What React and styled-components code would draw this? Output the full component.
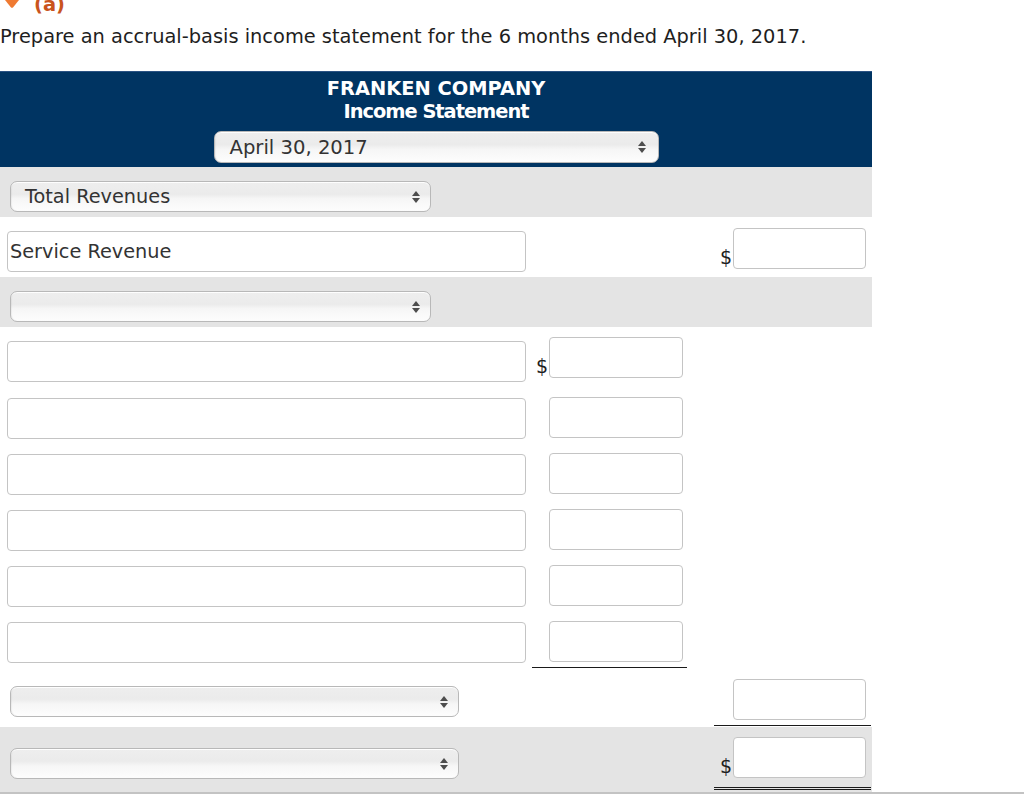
import React from 'react';
import styled, { createGlobalStyle } from 'styled-components';

const GlobalStyle = createGlobalStyle`
  html, body { margin: 0; padding: 0; background: #fff; }
  body { font-family: "DejaVu Sans", Verdana, sans-serif; color: #1e1e1e; overflow: hidden; }
  * { box-sizing: border-box; }
`;

const Page = styled.div`
  width: 1024px;
  height: 794px;
  overflow: hidden;
  display: flex;
  flex-direction: column;
`;

const PartHeading = styled.div`
  display: flex;
  align-items: flex-start;
  gap: 12px;
  height: 20px;
  margin-top: -5px;
  padding-left: 2px;
  font-size: 19.5px;
  font-weight: bold;
  line-height: 20px;
  color: #c9541d;
`;

const Caret = styled.svg`
  display: block;
  margin-top: 1px;
  flex: none;
`;

const Prompt = styled.p`
  margin: 9px 0 0;
  font-size: 19.4px;
  line-height: 26px;
  color: #1e1e1e;
  white-space: nowrap;
`;

const Statement = styled.div`
  width: 872px;
  margin-top: 21px;
  display: flex;
  flex-direction: column;
`;

const Banner = styled.div`
  background: #003462;
  border-top: 1px solid #2a5283;
  padding: 5px 0 4px;
  display: flex;
  flex-direction: column;
  align-items: center;
  color: #fff;
`;

const BannerTitle = styled.div`
  font-weight: bold;
  font-size: 19.4px;
  line-height: 23px;
  text-align: center;
  letter-spacing: ${(p) => p.$tight || 0}px;
  white-space: nowrap;
`;

const SelectBox = styled.div`
  display: flex;
  align-items: center;
  justify-content: space-between;
  width: ${(p) => p.$w}px;
  height: ${(p) => p.$h || 31}px;
  margin-top: ${(p) => p.$mt || 0}px;
  padding: 0 ${(p) => p.$pr || 10}px 0 ${(p) => p.$pl || 14}px;
  border: 1px solid #b8b8b8;
  border-radius: 7px;
  background: linear-gradient(to bottom, #eeeeee 0%, #ebebeb 42%, #f6f6f6 58%, #fdfdfd 100%);
  box-shadow: inset 0 1px 0 rgba(255, 255, 255, 0.9), inset 1px 0 1px rgba(0, 0, 0, 0.05);
  font-size: ${(p) => p.$fs || 19.3}px;
  color: #333;
  white-space: nowrap;
`;

const Row = styled.div`
  display: grid;
  grid-template-columns: 530px 160px 182px;
  height: ${(p) => p.$h}px;
  background: ${(p) => (p.$shade ? '#e4e4e4' : '#fff')};
`;

const Cell = styled.div`
  padding-top: ${(p) => p.$top || 0}px;
  padding-left: ${(p) => p.$left || 0}px;
`;

const Field = styled.input`
  display: block;
  width: ${(p) => p.$w}px;
  height: 41px;
  border: 1px solid #c4c4c4;
  border-radius: 4px;
  background: #fff;
  font: 19.3px "DejaVu Sans", Verdana, sans-serif;
  color: #333;
  padding: 0 0 0 2px;
  outline: none;
`;

const rules = {
  none: 'none',
  single: '1px solid #1a1a1a',
  double: '3px double #1a1a1a',
};

const Amount = styled.div`
  display: flex;
  align-items: flex-end;
  width: ${(p) => p.$w}px;
  margin-left: ${(p) => p.$ml}px;
  padding: 0 0 ${(p) => p.$pb || 0}px ${(p) => p.$pl}px;
  border-bottom: ${(p) => rules[p.$rule || 'none']};
`;

const Dollar = styled.span`
  width: 12px;
  flex: none;
  font-size: 19px;
  line-height: 19px;
  margin-bottom: 2px;
  margin-left: -1px;
  margin-right: 1px;
  color: #1e1e1e;
  visibility: ${(p) => (p.$show ? 'visible' : 'hidden')};
`;

const BottomRule = styled.div`
  height: 2px;
  width: 1024px;
  background: #c3c3c3;
`;

const Arrows = () => (
  <svg width="8" height="12" viewBox="0 0 8 12">
    <polygon points="0,5 4,0 8,5" fill="#4d4d4d" />
    <polygon points="0,7 8,7 4,12" fill="#4d4d4d" />
  </svg>
);

const Select = ({ label = '', ...rest }) => (
  <SelectBox {...rest}>
    <span>{label}</span>
    <Arrows />
  </SelectBox>
);

const Col2 = ({ show, rule, pb }) => (
  <Amount $w={155} $ml={2} $pl={5} $rule={rule} $pb={pb}>
    <Dollar $show={show}>$</Dollar>
    <Field $w={134} />
  </Amount>
);

const Col3 = ({ show, rule, pb }) => (
  <Amount $w={157} $ml={24} $pl={7} $rule={rule} $pb={pb}>
    <Dollar $show={show}>$</Dollar>
    <Field $w={133} />
  </Amount>
);

export default function App() {
  const middle = [0, 1, 2, 3];
  return (
    <Page>
      <GlobalStyle />
      <PartHeading>
        <Caret width="20" height="12" viewBox="0 0 20 12">
          <path d="M1 1.5 Q0.5 0 2.5 0 H17.5 Q19.5 0 19 1.5 L11.2 11.2 Q10 12.4 8.8 11.2 Z" fill="#ef7a32" />
        </Caret>
        <span>(a)</span>
      </PartHeading>
      <Prompt>Prepare an accrual-basis income statement for the 6 months ended April 30, 2017.</Prompt>
      <Statement>
        <Banner>
          <BannerTitle>FRANKEN COMPANY</BannerTitle>
          <BannerTitle $tight={-1}>Income Statement</BannerTitle>
          <Select label="April 30, 2017" $w={445} $h={32} $mt={8} $pl={15} $pr={12} $fs={19.6} />
        </Banner>

        <Row $h={50} $shade>
          <Cell $top={14} $left={10}>
            <Select label="Total Revenues" $w={421} />
          </Cell>
          <Cell />
          <Cell />
        </Row>

        <Row $h={60}>
          <Cell $top={14} $left={7}>
            <Field $w={519} defaultValue="Service Revenue" readOnly />
          </Cell>
          <Cell />
          <Cell $top={11}>
            <Col3 show />
          </Cell>
        </Row>

        <Row $h={50} $shade>
          <Cell $top={14} $left={10}>
            <Select $w={421} />
          </Cell>
          <Cell />
          <Cell />
        </Row>

        <Row $h={57}>
          <Cell $top={14} $left={7}>
            <Field $w={519} />
          </Cell>
          <Cell $top={10}>
            <Col2 show />
          </Cell>
          <Cell />
        </Row>

        {middle.map((i) => (
          <Row $h={56} key={i}>
            <Cell $top={14} $left={7}>
              <Field $w={519} />
            </Cell>
            <Cell $top={13}>
              <Col2 />
            </Cell>
            <Cell />
          </Row>
        ))}

        <Row $h={62}>
          <Cell $top={14} $left={7}>
            <Field $w={519} />
          </Cell>
          <Cell $top={13}>
            <Col2 rule="single" pb={5} />
          </Cell>
          <Cell />
        </Row>

        <Row $h={57}>
          <Cell $top={16} $left={10}>
            <Select $w={449} />
          </Cell>
          <Cell />
          <Cell $top={9}>
            <Col3 rule="single" pb={5} />
          </Cell>
        </Row>

        <Row $h={65} $shade>
          <Cell $top={21} $left={10}>
            <Select $w={449} />
          </Cell>
          <Cell />
          <Cell $top={10}>
            <Col3 show rule="double" pb={9} />
          </Cell>
        </Row>
      </Statement>
      <BottomRule />
    </Page>
  );
}
